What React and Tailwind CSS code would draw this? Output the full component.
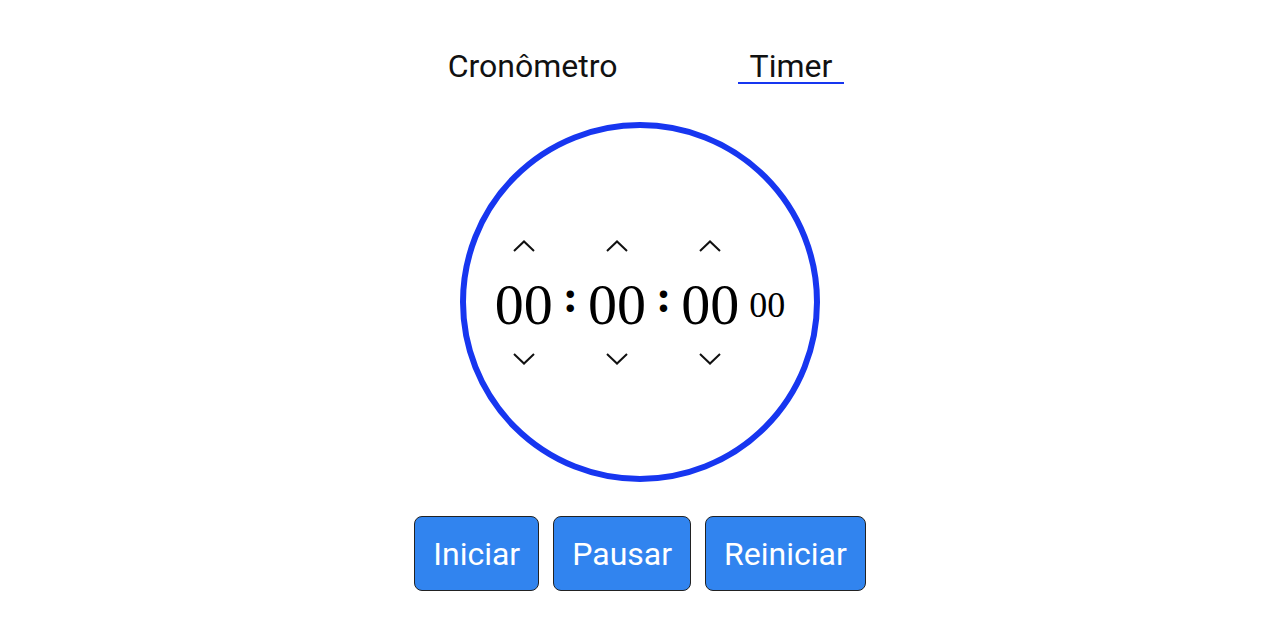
import React, { useState } from 'react'

function Chevron({ up }) {
  return (
    <svg className="w-[22px] h-[12px]" viewBox="0 0 22 12" fill="none" stroke="#111" strokeWidth={2}>
      {up ? <path d="M1 11l10-9.5 10 9.5" /> : <path d="M1 1l10 9.5 10-9.5" />}
    </svg>
  )
}

function Unit({ value }) {
  return (
    <div className="flex flex-col items-center">
      <button><Chevron up /></button>
      <span className="mt-[24px] text-[58px] leading-[58px] text-black">{value}</span>
      <button className="mt-[19px]"><Chevron /></button>
    </div>
  )
}

export default function App() {
  const [tab, setTab] = useState('timer')
  const [h] = useState('00')
  const [m] = useState('00')
  const [s] = useState('00')

  const tabs = [
    { id: 'crono', label: 'Cronômetro' },
    { id: 'timer', label: 'Timer' },
  ]

  return (
    <div className="min-h-screen bg-white flex flex-col items-center pt-[50px]" style={{ fontFamily: 'Roboto, sans-serif' }}>
      <div className="flex gap-[108px]">
        {tabs.map(t => (
          <button
            key={t.id}
            onClick={() => setTab(t.id)}
            className={`px-3 text-[32px] leading-[32px] text-[#111] border-b-2 ${tab === t.id ? 'border-[#1736f0]' : 'border-transparent'}`}
          >
            {t.label}
          </button>
        ))}
      </div>

      <div className="mt-[38px] w-[360px] h-[360px] rounded-full border-[6px] border-[#1736f0] flex items-center justify-center">
        <div className="flex items-center gap-[10px] text-black" style={{ fontFamily: '"Liberation Serif", serif' }}>
          <Unit value={h} />
          <span className="mb-[10px] text-[46px] leading-none font-bold">:</span>
          <Unit value={m} />
          <span className="mb-[10px] text-[46px] leading-none font-bold">:</span>
          <Unit value={s} />
          <span className="mt-[6px] text-[36px] leading-none">00</span>
        </div>
      </div>

      <div className="mt-[34px] flex gap-[14px]">
        {['Iniciar', 'Pausar', 'Reiniciar'].map(label => (
          <button
            key={label}
            className="px-[18px] h-[75px] rounded-lg border border-[#222] bg-[#3184ef] text-white text-[32px]"
          >
            {label}
          </button>
        ))}
      </div>
    </div>
  )
}
